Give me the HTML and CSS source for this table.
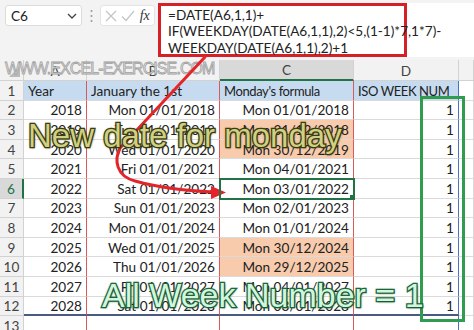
FILE: index.html
```html
<!DOCTYPE html>
<html>
<head>
<meta charset="utf-8">
<link rel="stylesheet" href="styles.css">
</head>
<body>
<div class="app">
  <div class="fbar">
    <div class="namebox"><span>C6</span>
      <svg width="10" height="6" viewBox="0 0 10 6"><path d="M1 1 L5 5 L9 1" fill="none" stroke="#444" stroke-width="1.3"/></svg>
    </div>
    <div class="grip"><svg width="3" height="14" viewBox="0 0 3 14"><circle cx="1.5" cy="2" r="1" fill="#999"/><circle cx="1.5" cy="7" r="1" fill="#999"/><circle cx="1.5" cy="12" r="1" fill="#999"/></svg></div>
    <div class="fbtns">
      <svg width="12" height="12" viewBox="0 0 12 12"><path d="M1 1 L11 11 M11 1 L1 11" stroke="#c4c4c4" stroke-width="1.2"/></svg>
      <svg width="14" height="12" viewBox="0 0 14 12"><path d="M1 6.5 L5 10.5 L13 1" fill="none" stroke="#c4c4c4" stroke-width="1.2"/></svg>
      <span class="fx">fx</span>
    </div>
    <div class="fwrap">
      <div class="formula">
        <div>=DATE(A6,1,1)+</div>
        <div>IF(WEEKDAY(DATE(A6,1,1),2)&lt;5,(1-1)*7,1*7)-</div>
        <div>WEEKDAY(DATE(A6,1,1),2)+1</div>
      </div>
    </div>
  </div>

  <div class="sheet">
    <div class="ch corner"><span class="tri"></span></div><div class="ch">A</div><div class="ch">B</div><div class="ch sel">C</div><div class="ch">D</div><div class="ch"></div>

    <div class="rh">1</div><div class="ca hd">Year</div><div class="cb hd">January the 1st</div><div class="cc hd tight">Monday's formula</div><div class="cd hd tight">ISO WEEK NUM</div><div class="ce"></div>
    <div class="rh">2</div><div class="ca n">2018</div><div class="cb n">Mon 01/01/2018</div><div class="cc n">Mon 01/01/2018</div><div class="cd n">1</div><div class="ce"></div>
    <div class="rh">3</div><div class="ca n">2019</div><div class="cb n">Tue 01/01/2019</div><div class="cc n org">Mon 31/12/2018</div><div class="cd n">1</div><div class="ce"></div>
    <div class="rh">4</div><div class="ca n">2020</div><div class="cb n">Wed 01/01/2020</div><div class="cc n org">Mon 30/12/2019</div><div class="cd n">1</div><div class="ce"></div>
    <div class="rh">5</div><div class="ca n">2021</div><div class="cb n">Fri 01/01/2021</div><div class="cc n">Mon 04/01/2021</div><div class="cd n">1</div><div class="ce"></div>
    <div class="rh sel">6</div><div class="ca n">2022</div><div class="cb n">Sat 01/01/2022</div><div class="cc n active">Mon 03/01/2022</div><div class="cd n">1</div><div class="ce"></div>
    <div class="rh">7</div><div class="ca n">2023</div><div class="cb n">Sun 01/01/2023</div><div class="cc n">Mon 02/01/2023</div><div class="cd n">1</div><div class="ce"></div>
    <div class="rh">8</div><div class="ca n">2024</div><div class="cb n">Mon 01/01/2024</div><div class="cc n">Mon 01/01/2024</div><div class="cd n">1</div><div class="ce"></div>
    <div class="rh">9</div><div class="ca n">2025</div><div class="cb n">Wed 01/01/2025</div><div class="cc n org">Mon 30/12/2024</div><div class="cd n">1</div><div class="ce"></div>
    <div class="rh">10</div><div class="ca n">2026</div><div class="cb n">Thu 01/01/2026</div><div class="cc n org">Mon 29/12/2025</div><div class="cd n">1</div><div class="ce"></div>
    <div class="rh">11</div><div class="ca n">2027</div><div class="cb n">Fri 01/01/2027</div><div class="cc n">Mon 04/01/2027</div><div class="cd n">1</div><div class="ce"></div>
    <div class="rh">12</div><div class="ca n last">2028</div><div class="cb n last">Sat 01/01/2028</div><div class="cc n last">Mon 03/01/2028</div><div class="cd n last">1</div><div class="ce"></div>
    <div class="rh">13</div><div class="ca"></div><div class="cb"></div><div class="cc"></div><div class="cd"></div><div class="ce"></div>
  </div>

  <div class="wm">WWW.EXCEL-EXERCISE.COM</div>

  <svg class="arrow" width="474" height="330" viewBox="0 0 474 330">
    <path d="M205 57 L120 148 C114 160 116 176 135 181 C160 188 190 191 213 192" fill="none" stroke="#e4242a" stroke-width="3" stroke-linecap="round"/>
    <polygon points="211,186 226,192.5 211,199" fill="#e4242a"/>
  </svg>

  <div class="greenbox"></div>
  <div class="callout c1">New date for monday</div>
  <div class="callout c2">All Week Number = 1</div>
</div>
</body>
</html>
```

FILE: styles.css
```css
html, body {
  margin: 0;
  padding: 0;
  background: #fff;
}
.app {
  position: relative;
  width: 474px;
  height: 330px;
  overflow: hidden;
  font-family: Lato, "Open Sans", sans-serif;
  color: #222;
}
.fbar {
  height: 60px;
  box-sizing: border-box;
  background: #f3f3f3;
  display: flex;
  align-items: flex-start;
  padding-top: 3px;
}
.namebox {
  margin: 2px 0 0 5px;
  width: 77px;
  height: 21px;
  box-sizing: border-box;
  background: #fff;
  border: 1px solid #dcdcdc;
  border-radius: 3px;
  display: flex;
  align-items: center;
  justify-content: space-between;
  padding: 0 4px 0 5px;
  font-size: 13.6px;
}
.grip {
  width: 18px;
  display: flex;
  justify-content: center;
  margin-top: 6px;
}
.fbtns {
  margin-top: 2px;
  width: 55px;
  height: 21px;
  box-sizing: border-box;
  background: #fff;
  border: 1px solid #e4e4e4;
  border-radius: 3px;
  display: flex;
  align-items: center;
  justify-content: space-around;
  padding: 0 2px;
}
.fx {
  font-family: "Liberation Serif", serif;
  font-style: italic;
  font-size: 14px;
  color: #333;
}
.fwrap {
  margin-left: 3px;
  flex: 1;
  height: 54px;
  background: #fff;
}
.formula {
  width: 249px;
  height: 54px;
  box-sizing: border-box;
  border: 3px solid #d52027;
  padding: 1px 0 0 7px;
  font-size: 13.6px;
  line-height: 16.3px;
  white-space: nowrap;
}

.sheet {
  display: grid;
  grid-template-columns: 24px 63px 133px 134px 105px 15px;
  grid-template-rows: 21px repeat(12, 19.6px) 20px;
  font-size: 13.6px;
}
.sheet > div {
  box-sizing: border-box;
  border-right: 1px solid #dadada;
  border-bottom: 1px solid #dadada;
  display: flex;
  align-items: center;
  padding: 1px 4px 0;
  white-space: nowrap;
  overflow: hidden;
}
.ch {
  background: #f2f2f2;
  justify-content: center;
  color: #444;
  border-color: #d2d2d2 !important;
}
.ch.sel {
  background: #d9d9d9;
  border-bottom: 2px solid #217346 !important;
}
.corner {
  position: relative;
}
.tri {
  position: absolute;
  right: 3px;
  bottom: 3px;
  width: 0;
  height: 0;
  border-left: 11px solid transparent;
  border-bottom: 11px solid #b9b9b9;
}
.rh {
  background: #f2f2f2;
  justify-content: center;
  color: #444;
  border-color: #d2d2d2 !important;
}
.rh.sel {
  background: #d9d9d9;
  border-right: 2px solid #217346 !important;
  color: #217346;
}
.n {
  justify-content: flex-end;
}
.ca, .cb, .cc {
  border-right-color: #d95a5a !important;
}
.cd {
  border-right-color: #4a72c0 !important;
}
.hd {
  background: #c7dbf0;
}
.tight {
  font-size: 13px;
  letter-spacing: -0.4px;
}
.org {
  background: #f8cbad;
}
.last {
  border-bottom: 2px solid #4a5a80 !important;
}
.active {
  position: relative;
  z-index: 1;
  outline: 2px solid #217346;
  outline-offset: -1px;
}
.active::after {
  content: "";
  position: absolute;
  right: -3px;
  bottom: -3px;
  width: 5px;
  height: 5px;
  background: #217346;
  border: 1px solid #fff;
}

.wm {
  position: absolute;
  left: 5px;
  top: 61px;
  font-family: "Liberation Sans", sans-serif;
  font-size: 16px;
  line-height: 1;
  letter-spacing: -0.9px;
  color: #ececec;
  -webkit-text-stroke: 0.8px #a0a0a0;
  white-space: nowrap;
}
.arrow {
  position: absolute;
  left: 0;
  top: 0;
}
.greenbox {
  position: absolute;
  left: 420px;
  top: 96px;
  width: 45px;
  height: 226px;
  box-sizing: border-box;
  border: 3px solid #2f9c50;
}
.callout {
  position: absolute;
  font-family: "Liberation Sans", sans-serif;
  line-height: 1;
  white-space: nowrap;
  paint-order: stroke fill;
}
.c1 {
  left: 28px;
  top: 119px;
  font-size: 33px;
  color: #cfd084;
  -webkit-text-stroke: 2.6px #3f4212;
  text-shadow: 0 0 3px rgba(50, 52, 10, 0.7), 1px 1px 2px rgba(50, 52, 10, 0.6);
}
.c2 {
  left: 102px;
  top: 278px;
  font-size: 34px;
  color: #d2f5e0;
  -webkit-text-stroke: 2.6px #1f6e3c;
  text-shadow: 0 0 3px rgba(20, 80, 40, 0.6), 1px 1px 2px rgba(20, 80, 40, 0.6);
}
```
